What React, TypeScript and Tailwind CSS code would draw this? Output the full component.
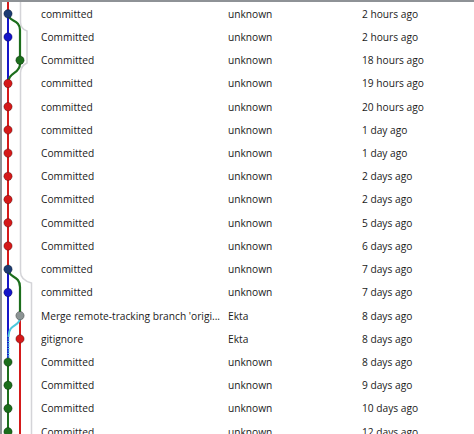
import React from "react";

const rows: [string, string, string][] = [
  ["committed", "unknown", "2 hours ago"],
  ["Committed", "unknown", "2 hours ago"],
  ["Committed", "unknown", "18 hours ago"],
  ["committed", "unknown", "19 hours ago"],
  ["committed", "unknown", "20 hours ago"],
  ["committed", "unknown", "1 day ago"],
  ["Committed", "unknown", "1 day ago"],
  ["Committed", "unknown", "2 days ago"],
  ["Committed", "unknown", "2 days ago"],
  ["Committed", "unknown", "5 days ago"],
  ["Committed", "unknown", "6 days ago"],
  ["committed", "unknown", "7 days ago"],
  ["committed", "unknown", "7 days ago"],
  ["Merge remote-tracking branch 'origi...", "Ekta", "8 days ago"],
  ["gitignore", "Ekta", "8 days ago"],
  ["Committed", "unknown", "8 days ago"],
  ["Committed", "unknown", "9 days ago"],
  ["Committed", "unknown", "10 days ago"],
  ["Committed", "unknown", "12 days ago"],
];

const P = 23.22;
const cy = (i: number) => 13.8 + P * i;

const RED = "#d41a1a";
const NAVY = "#1d3c72";
const BLUE = "#1515c8";
const GREEN = "#1c6e1c";
const GRAY = "#8c9494";
const CYAN = "#4cc8dc";

function Dot({ x, i, c }: { x: number; i: number; c: string }) {
  return <circle cx={x} cy={cy(i)} r={4.2} fill={c} stroke="rgba(0,0,0,0.35)" strokeWidth={0.8} />;
}

function Graph() {
  const dots: { x: number; i: number; c: string }[] = [
    { x: 8, i: 0, c: NAVY },
    { x: 8, i: 1, c: BLUE },
    { x: 20, i: 2, c: GREEN },
  ];
  for (let i = 3; i <= 10; i++) dots.push({ x: 8, i, c: RED });
  dots.push({ x: 8, i: 11, c: NAVY });
  dots.push({ x: 8, i: 12, c: BLUE });
  dots.push({ x: 20, i: 13, c: GRAY });
  dots.push({ x: 20, i: 14, c: RED });
  for (let i = 15; i <= 18; i++) dots.push({ x: 8, i, c: GREEN });
  return (
    <svg width={37} height={432} viewBox="2 2 37 432" className="shrink-0 block">
      <path
        d="M20.5 0 L20.5 22 Q20.5 29 27 31 L27 63 Q20.5 66 20.5 73 L20.5 272 Q20.5 280 31.5 283 L31.5 440"
        fill="none"
        stroke="#d4d4d8"
        strokeWidth={1.5}
      />
      <line x1={8} y1={0} x2={8} y2={cy(0)} stroke={RED} strokeWidth={2} />
      <line x1={8} y1={cy(0)} x2={8} y2={cy(3)} stroke={BLUE} strokeWidth={2} />
      <path
        d={`M8 ${cy(0)} C8 22 20 19 20 30 L20 64 C20 74 8 72 8 ${cy(3)}`}
        fill="none"
        stroke={GREEN}
        strokeWidth={2.2}
      />
      <line x1={8} y1={cy(3)} x2={8} y2={cy(11)} stroke={RED} strokeWidth={2} />
      <line x1={8} y1={cy(11)} x2={8} y2={cy(15)} stroke={BLUE} strokeWidth={2} />
      <path
        d={`M8 ${cy(11)} C8 278 20 275 20 287 L20 ${cy(13)}`}
        fill="none"
        stroke={GREEN}
        strokeWidth={2.2}
      />
      <line x1={20} y1={cy(13)} x2={20} y2={440} stroke={RED} strokeWidth={2} />
      <path
        d={`M20 ${cy(13) + 2} C20 327 9 323 8.5 336`}
        fill="none"
        stroke={CYAN}
        strokeWidth={2}
      />
      <line x1={8.5} y1={336} x2={8.5} y2={cy(15)} stroke={CYAN} strokeWidth={2} strokeDasharray="1.2 1.2" />
      <line x1={8} y1={cy(15)} x2={8} y2={440} stroke={GREEN} strokeWidth={2} />
      {dots.map((d, k) => (
        <Dot key={k} {...d} />
      ))}
    </svg>
  );
}

export default function App() {
  return (
    <div
      className="w-[474px] h-[434px] overflow-hidden bg-white border-t-2 border-l-2 border-[#8e9296] flex"
      style={{ fontFamily: '"Open Sans", "Noto Sans", sans-serif' }}
    >
      <Graph />
      <div className="flex flex-col pl-[2px] text-[10.2px] text-[#1a1a1a]">
        {rows.map(([m, a, d], i) => (
          <div key={i} className="h-[23.22px] shrink-0 flex items-center pt-[1.5px]">
            <div className="w-[187px] truncate">{m}</div>
            <div className="w-[134px]">{a}</div>
            <div>{d}</div>
          </div>
        ))}
      </div>
    </div>
  );
}
